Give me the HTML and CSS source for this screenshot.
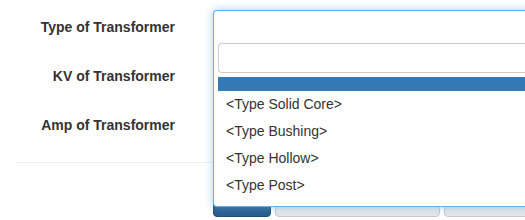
FILE: index.html
```html
<!DOCTYPE html>
<html>
<head>
<meta charset="utf-8">
<link rel="stylesheet" href="styles.css">
</head>
<body>
<div class="page">
  <form class="form">
    <div class="row">
      <label class="label">Type of Transformer</label>
      <div class="control">
        <div class="select-open">
          <div class="select-head"></div>
          <div class="search-wrap"><input class="search" type="text"></div>
          <ul class="options">
            <li class="option highlighted"></li>
            <li class="option">&lt;Type Solid Core&gt;</li>
            <li class="option">&lt;Type Bushing&gt;</li>
            <li class="option">&lt;Type Hollow&gt;</li>
            <li class="option">&lt;Type Post&gt;</li>
          </ul>
        </div>
      </div>
    </div>
    <div class="row">
      <label class="label">KV of Transformer</label>
      <div class="control"><input class="input" type="text"></div>
    </div>
    <div class="row">
      <label class="label">Amp of Transformer</label>
      <div class="control"><input class="input" type="text"></div>
    </div>
    <hr class="divider">
    <div class="actions">
      <button type="button" class="btn btn-primary">Save</button>
      <button type="button" class="btn btn-default">Save and Add Another</button>
      <button type="button" class="btn btn-default">Save and Continue</button>
    </div>
  </form>
</div>
</body>
</html>
```
FILE: styles.css
```css
* { box-sizing: border-box; }
html, body { margin: 0; padding: 0; background: #fff; }
body {
  font-family: "Liberation Sans", Helvetica, Arial, sans-serif;
  font-size: 14px;
  color: #333;
  overflow: hidden;
}
.page { padding: 10px 16px 0; width: 525px; }
.form { margin: 0; }
.row {
  display: grid;
  grid-template-columns: 159px 1fr;
  column-gap: 38px;
  height: 34px;
  margin-bottom: 15px;
}
.label {
  text-align: right;
  font-weight: bold;
  line-height: 34px;
  white-space: nowrap;
}
.control { position: relative; }
.input {
  width: 100%;
  height: 34px;
  border: 1px solid #ccc;
  border-radius: 4px;
}
.select-open {
  position: absolute;
  top: 0;
  left: 0;
  width: 320px;
  background: #fff;
  border: 1px solid #66afe9;
  border-right: 0;
  border-radius: 4px 0 0 4px;
  box-shadow: 0 0 8px rgba(102, 175, 233, 0.6);
  z-index: 10;
  padding: 0 0 7px 4px;
}
.select-head { height: 31px; }
.search-wrap { padding: 1px 0 0 0; }
.search {
  display: block;
  width: 100%;
  height: 30px;
  border: 1px solid #ccc;
  border-radius: 4px 0 0 4px;
  border-right: 0;
  margin: 0;
  padding: 0 6px;
  font: inherit;
}
.options {
  list-style: none;
  margin: 4px 0 0;
  padding: 0;
}
.option {
  height: 27px;
  line-height: 27px;
  padding: 0 8px;
  color: #333;
  white-space: nowrap;
}
.option.highlighted {
  height: 14px;
  background: #337ab7;
}
.divider {
  border: 0;
  border-top: 1px solid #eee;
  margin: 20px 0 20px;
}
.actions {
  padding-left: 197px;
  white-space: nowrap;
  display: flex;
  gap: 4px;
  overflow: hidden;
  width: 509px;
}
.btn {
  height: 34px;
  padding: 6px 12px;
  font: inherit;
  font-size: 14px;
  border-radius: 4px;
  border: 1px solid transparent;
  flex: none;
}
.btn-primary {
  background: #285e8e;
  border-color: #204d74;
  color: #fff;
}
.btn-default {
  background: #e6e6e6;
  border-color: #c8c8c8;
  color: #333;
}
```
